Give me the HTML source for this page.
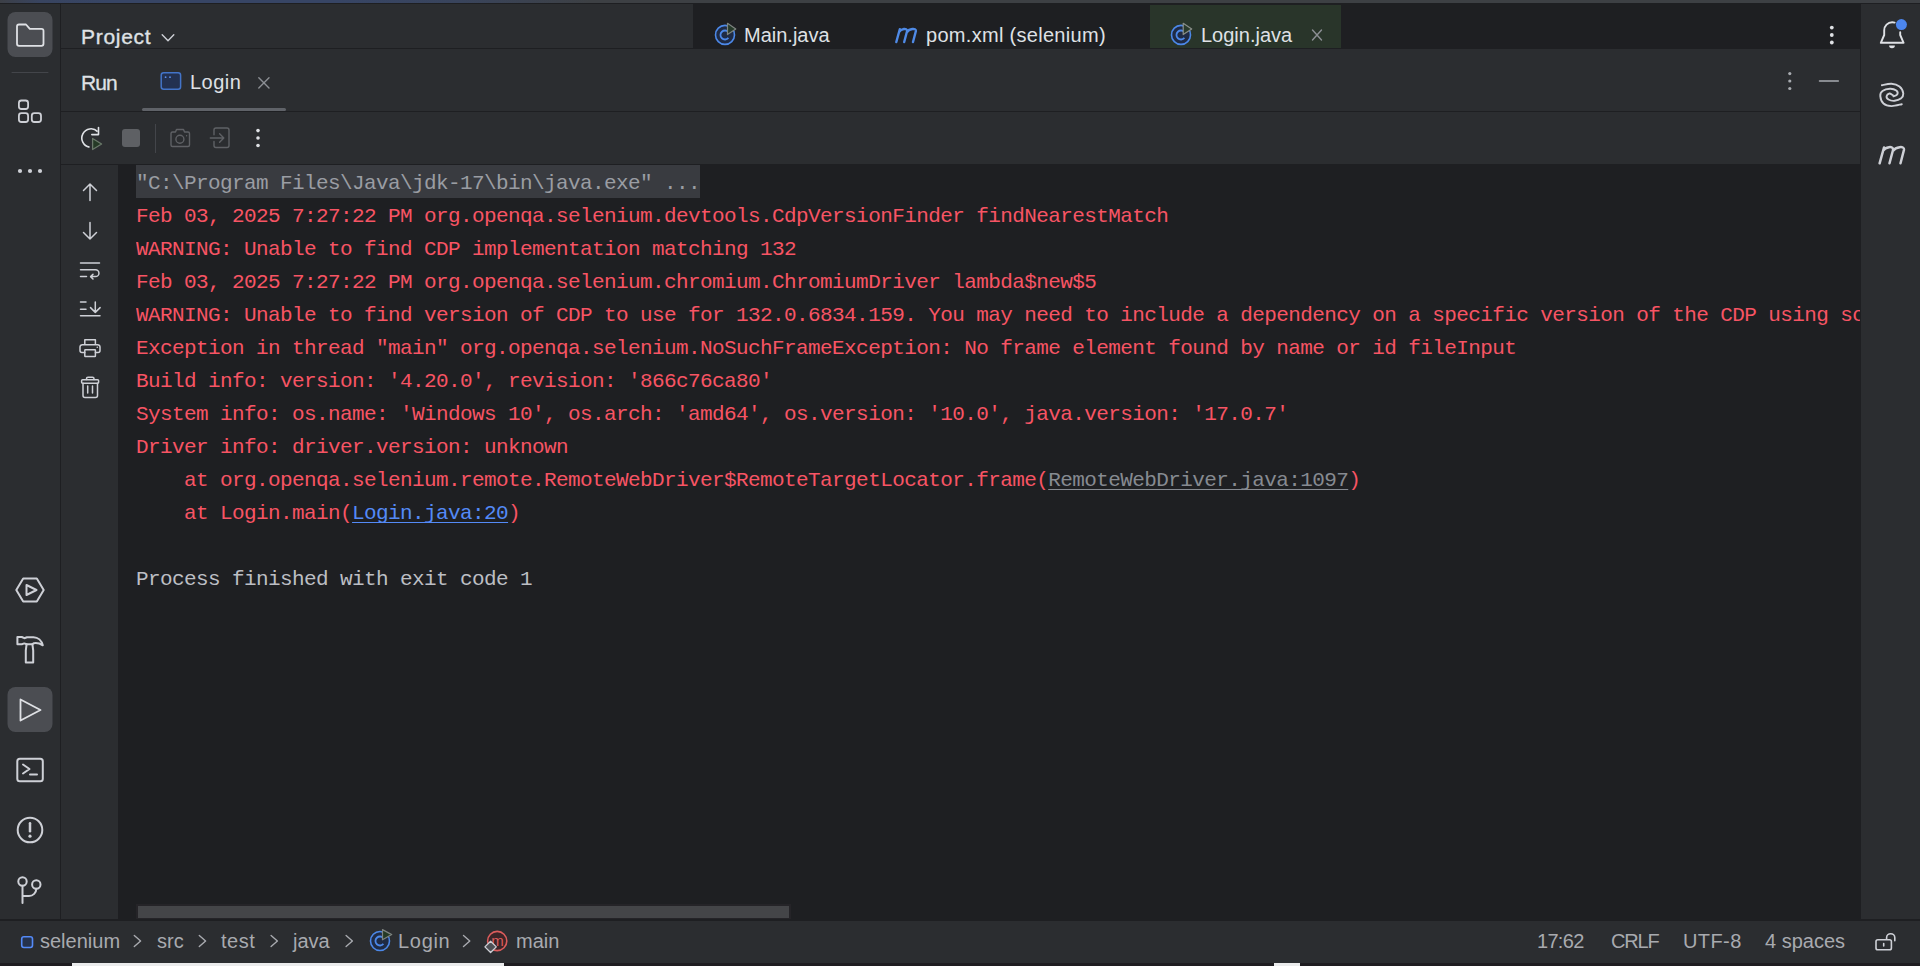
<!DOCTYPE html>
<html><head><meta charset="utf-8">
<style>
*{margin:0;padding:0;box-sizing:border-box}
html,body{width:1920px;height:966px;overflow:hidden;background:#2B2D30;font-family:"Liberation Sans",sans-serif;}
.a{position:absolute}
.ui{font-family:"Liberation Sans",sans-serif;font-size:20px;color:#DFE1E5;white-space:nowrap;line-height:1}
.mono{font-family:"Liberation Mono",monospace;font-size:21px;letter-spacing:-0.6px;white-space:pre;line-height:33px}
svg{position:absolute;overflow:visible}
</style></head><body>
<!-- top strip -->
<div class="a" style="left:0;top:0;width:1920px;height:3px;background:linear-gradient(90deg,#3c3f46 0px,#384460 40px,#374565 110px,#374565 340px,#39445c 460px,#3d4044 590px,#3d4044 100%)"></div>
<!-- left stripe -->
<div class="a" style="left:0;top:3px;width:60px;height:916px;background:#2B2D30"></div>
<div class="a" style="left:60px;top:3px;width:1px;height:916px;background:#1E1F22"></div>
<!-- right stripe -->
<div class="a" style="left:1860px;top:3px;width:1px;height:916px;background:#1E1F22"></div>
<div class="a" style="left:1861px;top:3px;width:59px;height:916px;background:#2B2D30"></div>
<!-- project header -->
<div class="a" style="left:61px;top:3px;width:632px;height:45px;background:#2B2D30"></div>
<div class="a ui" style="left:81px;top:26.2px;font-size:21px;letter-spacing:0.7px;-webkit-text-stroke:0.35px #DFE1E5">Project</div>
<!-- editor tabs -->
<div class="a" style="left:693px;top:3px;width:1167px;height:45px;background:#1E1F22"></div>
<div class="a" style="left:1150px;top:5px;width:191px;height:43px;background:#29352A"></div>
<div class="a ui" style="left:744px;top:25px">Main.java</div>
<div class="a ui" style="left:926px;top:25px;letter-spacing:0.3px">pom.xml (selenium)</div>
<div class="a ui" style="left:1201px;top:25px">Login.java</div>
<div class="a" style="left:0;top:3px;width:1920px;height:1px;background:#1E1F22"></div>
<!-- border y=48 -->
<div class="a" style="left:61px;top:48px;width:1799px;height:1px;background:#1E1F22"></div>
<!-- run header -->
<div class="a ui" style="left:81px;top:71.6px;font-size:21px;letter-spacing:-0.9px;-webkit-text-stroke:0.3px #DFE1E5">Run</div>
<div class="a ui" style="left:190px;top:72.2px;letter-spacing:0.5px">Login</div>
<div class="a" style="left:142px;top:108px;width:144px;height:3px;border-radius:2px;background:#5F6268"></div>
<div class="a" style="left:61px;top:111px;width:1799px;height:1px;background:#1E1F22"></div>
<!-- toolbar separator -->
<div class="a" style="left:155px;top:124px;width:1px;height:29px;background:#43454A"></div>
<div class="a" style="left:61px;top:164px;width:1799px;height:1px;background:#1E1F22"></div>
<!-- console -->
<div class="a" style="left:118px;top:165px;width:1742px;height:754px;background:#1E1F22"></div>
<div class="a" style="left:136px;top:165px;width:564px;height:33px;background:#393B40"></div>
<div class="a mono" style="left:136px;top:167px;width:1724px;height:660px;overflow:hidden;color:#F75464"><span style="color:#9A9DA3">"C:\Program Files\Java\jdk-17\bin\java.exe" ...</span>
Feb 03, 2025 7:27:22 PM org.openqa.selenium.devtools.CdpVersionFinder findNearestMatch
WARNING: Unable to find CDP implementation matching 132
Feb 03, 2025 7:27:22 PM org.openqa.selenium.chromium.ChromiumDriver lambda$new$5
WARNING: Unable to find version of CDP to use for 132.0.6834.159. You may need to include a dependency on a specific version of the CDP using something similar to
Exception in thread "main" org.openqa.selenium.NoSuchFrameException: No frame element found by name or id fileInput
Build info: version: '4.20.0', revision: '866c76ca80'
System info: os.name: 'Windows 10', os.arch: 'amd64', os.version: '10.0', java.version: '17.0.7'
Driver info: driver.version: unknown
    at org.openqa.selenium.remote.RemoteWebDriver$RemoteTargetLocator.frame(<span style="color:#868A91;text-decoration:underline;text-decoration-thickness:1px;text-decoration-skip-ink:none;text-underline-offset:3px">RemoteWebDriver.java:1097</span>)
    at Login.main(<span style="color:#548AF7;text-decoration:underline;text-decoration-thickness:1px;text-decoration-skip-ink:none;text-underline-offset:3px">Login.java:20</span>)

<span style="color:#BCBEC4">Process finished with exit code 1</span></div>
<!-- scrollbar -->
<div class="a" style="left:136px;top:904px;width:655px;height:15px;background:#252428"></div>
<div class="a" style="left:138px;top:906px;width:651px;height:12px;background:#444548"></div>
<!-- status bar -->
<div class="a" style="left:0;top:919px;width:1920px;height:2px;background:#1E1F22"></div>
<div class="a" style="left:0;top:921px;width:1920px;height:42px;background:#2B2D30"></div>
<div class="a ui" style="left:40px;top:931px;color:#A8AAAF">selenium</div>
<div class="a ui" style="left:157px;top:931px;color:#A8AAAF">src</div>
<div class="a ui" style="left:221px;top:931px;color:#A8AAAF;letter-spacing:0.5px">test</div>
<div class="a ui" style="left:293px;top:931px;color:#A8AAAF">java</div>
<div class="a ui" style="left:398px;top:931px;color:#A8AAAF;letter-spacing:0.7px">Login</div>
<div class="a ui" style="left:516px;top:931px;color:#A8AAAF">main</div>
<div class="a ui" style="left:1537px;top:931px;color:#A8AAAF;letter-spacing:-0.7px">17:62</div>
<div class="a ui" style="left:1611px;top:931px;color:#A8AAAF;letter-spacing:-1.2px">CRLF</div>
<div class="a ui" style="left:1683px;top:931px;color:#A8AAAF;letter-spacing:0.4px">UTF-8</div>
<div class="a ui" style="left:1765px;top:931px;color:#A8AAAF">4 spaces</div>
<!-- bottom strip -->
<div class="a" style="left:0;top:963px;width:1920px;height:3px;background:#1F1D21"></div>
<div class="a" style="left:72px;top:963px;width:432px;height:3px;background:#EAEBEC"></div>
<div class="a" style="left:1274px;top:963px;width:26px;height:3px;background:#EAEBEC"></div>

<svg width="1920" height="966" style="left:0;top:0" fill="none" stroke-linecap="round" stroke-linejoin="round">
<!-- left stripe -->
<rect x="7.5" y="12" width="45" height="45" rx="8" fill="#4B4D52" stroke="none"/>
<path d="M17,26.5 a2,2 0 0 1 2,-2 h7 l3.8,4.3 h11.7 a2,2 0 0 1 2,2 v13 a2,2 0 0 1 -2,2 h-22.5 a2,2 0 0 1 -2,-2 z" stroke="#DFE1E5" stroke-width="1.8"/>
<line x1="12" y1="72.5" x2="48" y2="72.5" stroke="#43454A" stroke-width="1"/>
<rect x="18.9" y="100.5" width="9.2" height="8.5" rx="2.5" stroke="#CED0D6" stroke-width="1.8"/>
<rect x="18.9" y="113.2" width="9.2" height="8.8" rx="2.5" stroke="#CED0D6" stroke-width="1.8"/>
<rect x="31.8" y="113.2" width="9.2" height="8.8" rx="2.5" stroke="#CED0D6" stroke-width="1.8"/>
<g fill="#CED0D6" stroke="none"><circle cx="20" cy="171" r="2.1"/><circle cx="30" cy="171" r="2.1"/><circle cx="40" cy="171" r="2.1"/></g>
<path d="M16.3,590 L23.2,578.4 H36.8 L43.7,590 L36.8,601.6 H23.2 Z" stroke="#CED0D6" stroke-width="2"/>
<path d="M26.5,585 L36.5,590 L26.5,595 Z" stroke="#CED0D6" stroke-width="2"/>
<path d="M17.4,637 H21.8 L24.3,638.2 L27,637.2 H33.5 C38,637.2 41.6,640.5 42.8,645.3 C40,643.5 37,642.8 34,643.2 L32.4,644.2 H26.6 L24.3,643.4 L21.8,644.3 H17.4 Z" stroke="#CED0D6" stroke-width="2"/>
<path d="M26.6,644.2 L25.8,650.5 V662.5 H33.2 V650.5 L32.4,644.2" stroke="#CED0D6" stroke-width="2"/>
<rect x="7.5" y="687" width="45" height="45" rx="8" fill="#4B4D52" stroke="none"/>
<path d="M20.5,699.5 L40.5,710 L20.5,720.5 Z" stroke="#DFE1E5" stroke-width="1.8"/>
<rect x="17.3" y="758.8" width="25.5" height="22.5" rx="2.5" stroke="#CED0D6" stroke-width="2"/>
<path d="M23,764.5 L29.5,769 L23,773.5 M30,774.5 H37" stroke="#CED0D6" stroke-width="2"/>
<circle cx="30" cy="830" r="12.3" stroke="#CED0D6" stroke-width="2"/>
<path d="M30,823.2 V831.3" stroke="#CED0D6" stroke-width="2.5"/>
<circle cx="30" cy="836.2" r="1.6" fill="#CED0D6" stroke="none"/>
<circle cx="22.5" cy="881.5" r="4.2" stroke="#CED0D6" stroke-width="2"/>
<circle cx="36.3" cy="884.5" r="4.2" stroke="#CED0D6" stroke-width="2"/>
<path d="M22.5,885.7 V903 M22.5,896 H29 a7.3,7.3 0 0 0 7.3,-7.3" stroke="#CED0D6" stroke-width="2"/>
<!-- right stripe -->
<path d="M1894.7,22.6 C1893.8,22.4 1892.8,22.3 1892.2,22.3 A8,8 0 0 0 1884.2,30.3 V35 L1880.8,42.8 H1903.6 L1900.2,35 V32.2" stroke="#DFE1E5" stroke-width="1.9"/>
<path d="M1889.1,45.6 A2.9,2.7 0 0 0 1894.9,45.6 Z" fill="#DFE1E5" stroke="none"/>
<circle cx="1901.4" cy="24.6" r="5.5" fill="#4C86EE" stroke="none"/>
<path d="M1881.9,85.3 C1883.5,85.0 1888.6,83.5 1891.5,83.7 C1894.4,83.9 1897.5,84.9 1899.5,86.5 C1901.5,88.1 1903.1,91.5 1903.3,93.5 C1903.5,95.5 1902.2,97.4 1900.8,98.6 C1899.3,99.8 1896.6,100.6 1894.6,100.8 C1892.5,101.0 1889.8,100.3 1888.5,99.5 C1887.2,98.7 1886.4,97.1 1886.6,96.1 C1886.8,95.1 1888.4,93.7 1889.4,93.5 C1890.4,93.3 1892.2,94.9 1892.8,95.2 M1901.8,104.2 C1900.1,104.5 1894.5,106.2 1891.5,106.1 C1888.5,106.0 1885.4,105.2 1883.5,103.5 C1881.6,101.8 1880.5,98.2 1880.3,96.1 C1880.1,94.0 1880.9,92.2 1882.5,91.0 C1884.1,89.8 1887.7,88.8 1890.0,88.7 C1892.3,88.6 1895.1,89.6 1896.3,90.5 C1897.5,91.4 1897.8,93.3 1897.3,94.3 C1896.8,95.3 1894.1,96.0 1893.4,96.3" stroke="#CED0D6" stroke-width="1.9"/>
<!-- editor tab icons -->
<g>
<circle cx="725.0" cy="34.9" r="9.5" fill="#1F2B45" stroke="#4C88E8" stroke-width="1.6"/>
<path d="M728.4,32.1 A4.5,4.5 0 1 0 728.4,37.9" stroke="#4C88E8" stroke-width="1.8" stroke-linecap="butt"/>
<path d="M727.5,23.3 L735.8,29 L727.5,34.6 Z" fill="#263A2A" stroke="#7E8480" stroke-width="1.2"/>
</g>
<g>
<circle cx="1181.0" cy="34.9" r="9.5" fill="#1F2B45" stroke="#4C88E8" stroke-width="1.6"/>
<path d="M1184.4,32.1 A4.5,4.5 0 1 0 1184.4,37.9" stroke="#4C88E8" stroke-width="1.8" stroke-linecap="butt"/>
<path d="M1183.2,23.3 L1191.7,29 L1183.2,34.6 Z" fill="#2A3A2B" stroke="#8A8F8A" stroke-width="1.2"/>
</g>
<path d="M1312.5,30 L1321.5,40 M1321.5,30 L1312.5,40" stroke="#8C8F94" stroke-width="1.4"/>
<g fill="#DFE1E5" stroke="none"><circle cx="1831.8" cy="27.6" r="1.9"/><circle cx="1831.8" cy="35" r="1.9"/><circle cx="1831.8" cy="42.5" r="1.9"/></g>
<path d="M162.2,34.8 L168,40.8 L173.8,34.8" stroke="#CED0D6" stroke-width="1.4"/>
<!-- run header -->
<rect x="161.2" y="72.7" width="19.4" height="16.6" rx="2.5" fill="#233150" stroke="#4374C8" stroke-width="1.5"/>
<g fill="#5B8DE8" stroke="none"><circle cx="165.6" cy="77.2" r="0.9"/><circle cx="170" cy="77.2" r="0.9"/></g>
<path d="M258.8,77.7 L269,87.9 M269,77.7 L258.8,87.9" stroke="#8C8F94" stroke-width="1.4"/>
<g fill="#A8ABB0" stroke="none"><circle cx="1789.8" cy="73.6" r="1.6"/><circle cx="1789.8" cy="81" r="1.6"/><circle cx="1789.8" cy="88.5" r="1.6"/></g>
<path d="M1819.5,81 H1838.3" stroke="#A8ABB0" stroke-width="1.5"/>
<!-- toolbar -->
<path d="M97.6,131.6 A9.2,9.2 0 1 0 89.5,147.1" stroke="#DFE1E5" stroke-width="1.6" stroke-linecap="butt"/>
<path d="M98.5,127.5 V134.6 H91.8" stroke="#DFE1E5" stroke-width="1.6"/>
<path d="M92.6,138.5 L101.6,144 L92.6,149.5 Z" fill="#253A26" stroke="#6B7A6B" stroke-width="1.3"/>
<rect x="122" y="129" width="18" height="18" rx="3" fill="#5E6064" stroke="none"/>
<path d="M171,133.5 a1.5,1.5 0 0 1 1.5,-1.5 h3 l1,-2.5 h7 l1,2.5 h3.5 a1.5,1.5 0 0 1 1.5,1.5 v11.5 a1.5,1.5 0 0 1 -1.5,1.5 h-15.5 a1.5,1.5 0 0 1 -1.5,-1.5 z" stroke="#5F6165" stroke-width="1.4"/>
<circle cx="179.9" cy="139.2" r="4" stroke="#5F6165" stroke-width="1.4"/>
<circle cx="186.6" cy="135.8" r="0.7" fill="#5F6165" stroke="none"/>
<path d="M214,134.8 V130 a2,2 0 0 1 2,-2 h11 a2,2 0 0 1 2,2 v15.5 a2,2 0 0 1 -2,2 h-11 a2,2 0 0 1 -2,-2 V141.5" stroke="#5F6165" stroke-width="1.4"/>
<path d="M210.3,138 H223.8 M219.6,133.8 L223.8,138 L219.6,142.3" stroke="#5F6165" stroke-width="1.4"/>
<g fill="#DFE1E5" stroke="none"><circle cx="258" cy="130.6" r="1.8"/><circle cx="258" cy="138" r="1.8"/><circle cx="258" cy="145.5" r="1.8"/></g>
<!-- gutter -->
<g stroke="#CED0D6" stroke-width="1.5">
<path d="M90,184 V200.5 M83.5,190.5 L90,184 L96.5,190.5"/>
<path d="M90,222.5 V239 M83.5,232.5 L90,239 L96.5,232.5"/>
<path d="M80.5,263 H99.5 M80.5,269.7 H95.5 a3.45,3.45 0 0 1 0,6.9 H90.8 M93,274.2 L90.6,276.6 L93,279 M80.5,276.6 H86.5"/>
<path d="M80.5,302 H86 M80.5,309.2 H86 M80.5,315.8 H100 M95.3,302 V312.5 M90.5,307.6 L95.3,312.4 L100.1,307.6"/>
<path d="M84.8,344.5 V339.8 H95.4 V344.5 M84.8,352.5 H82 a2,2 0 0 1 -2,-2 V347 a2.3,2.3 0 0 1 2.3,-2.3 H97.7 a2.3,2.3 0 0 1 2.3,2.3 V350.5 a2,2 0 0 1 -2,2 H95.4"/>
<rect x="84.8" y="349.8" width="10.6" height="6.8" rx="0.5"/>
<path d="M86.5,379.5 V378.8 a1.5,1.5 0 0 1 1.5,-1.5 h4.5 a1.5,1.5 0 0 1 1.5,1.5 V379.5"/>
<rect x="81.6" y="379.8" width="17" height="3.4" rx="1"/>
<path d="M83,383.2 V395.5 a2,2 0 0 0 2,2 H95.5 a2,2 0 0 0 2,-2 V383.2 M87.7,386 V393 M92.5,386 V393"/>
</g>
<circle cx="97.3" cy="347.2" r="0.8" fill="#CED0D6" stroke="none"/>
<!-- status bar -->
<rect x="21.7" y="936.7" width="10.8" height="10.8" rx="2.2" fill="#25324D" stroke="#548AF7" stroke-width="1.6"/>
<g stroke="#A8AAAF" stroke-width="1.4">
<path d="M134.3,935.5 L140.6,941 L134.3,946.6"/>
<path d="M199.3,935.5 L205.6,941 L199.3,946.6"/>
<path d="M271.1,935.5 L277.4,941 L271.1,946.6"/>
<path d="M346.1,935.5 L352.4,941 L346.1,946.6"/>
<path d="M463.5,935.5 L469.8,941 L463.5,946.6"/>
</g>
<circle cx="380" cy="941" r="9.5" fill="#1F2B45" stroke="#4C88E8" stroke-width="1.6"/>
<path d="M383.4,938.1 A4.5,4.5 0 1 0 383.4,943.9" stroke="#4C88E8" stroke-width="1.8" stroke-linecap="butt"/>
<path d="M382.5,929.6 L391.7,934.6 L382.5,939.8 Z" fill="#253A26" stroke="#7E8480" stroke-width="1.2"/>
<circle cx="497.2" cy="941" r="9.6" fill="#3B2528" stroke="#DB5C5C" stroke-width="1.6"/>
<text x="497.5" y="946" font-family="Liberation Sans" font-size="15" fill="#DB5C5C" stroke="none" text-anchor="middle">m</text>
<path d="M490.6,941.3 L496.3,946.9 L490.6,952.5 L484.9,946.9 Z" fill="#4E5055" stroke="#CED0D6" stroke-width="1.3"/>
<path d="M1877.8,939.7 H1889.6 a1.8,1.8 0 0 1 1.8,1.8 V948 a1.8,1.8 0 0 1 -1.8,1.8 H1877.8 a1.8,1.8 0 0 1 -1.8,-1.8 V941.5 a1.8,1.8 0 0 1 1.8,-1.8 Z M1886.6,939.7 V937.8 a4.1,4.1 0 0 1 8.2,0 V940.8 M1883.7,943.6 V946" stroke="#CED0D6" stroke-width="1.6"/>
<path d="M896.3,42.0 L899.8,29.2 M899.2,31.8 C900.9,28.8 907.3,27.6 907.1,31.0 L904.2,42.0 M907.3,31.8 C909.1,28.8 916.3,27.6 915.9,31.0 L913.0,42.0" stroke="#4F8AE6" stroke-width="2.4"/>
<path d="M1879.6,163.3 L1884.0,147.5 M1883.2,150.7 C1885.4,146.9 1893.3,145.4 1893.1,149.7 L1889.5,163.3 M1893.3,150.7 C1895.5,146.9 1904.6,145.4 1904.0,149.7 L1900.5,163.3" stroke="#CED0D6" stroke-width="2.5"/>
</svg>
</body></html>
